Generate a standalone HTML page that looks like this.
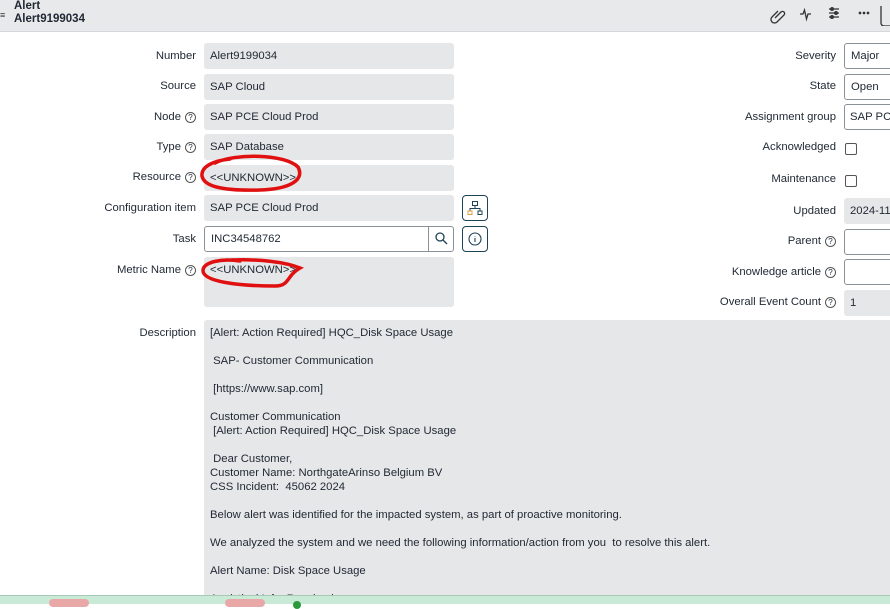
<!DOCTYPE html>
<html><head><style>
*{box-sizing:border-box;margin:0;padding:0}
body{width:890px;height:604px;overflow:hidden;background:#fff;font-family:"Liberation Sans",sans-serif;font-size:11.3px;color:#1f2733;position:relative}
.hdr{position:absolute;left:0;top:0;width:890px;height:32px;background:#e8e9eb;border-bottom:1px solid #d5d7da}
.hdr .t{position:absolute;left:14px;top:0;font-weight:bold;font-size:11.5px;line-height:13px}
.lbl{position:absolute;text-align:right;white-space:nowrap;line-height:14px}
.in{position:absolute;border-radius:3px;padding:0 6px;line-height:26px;white-space:nowrap;overflow:hidden}
.g{background:#e6e7e9}
.w{background:#fff;border:1px solid #8b9199}
.q{display:inline-block;width:11px;height:11px;border:1px solid #555;border-radius:50%;font-size:8px;line-height:9px;text-align:center;vertical-align:0px;margin-left:4px}
.cb{position:absolute;width:12px;height:12px;border:1px solid #555;border-radius:2px;background:#fff}
.btn{position:absolute;width:26px;height:26px;border:1px solid #1d4354;border-radius:4px;background:#fff}
.desc{position:absolute;left:204px;top:320px;width:700px;height:280px;background:#e6e7e9;border-radius:3px;padding:6px 6px;line-height:14px}
.desc p{margin-bottom:14px}
</style></head><body>
<div class="hdr"><div style="position:absolute;left:0;top:10px;font-size:9px;color:#333">≡</div><div class="t">Alert<br>Alert9199034</div>
<svg style="position:absolute;left:770px;top:6px" width="120" height="20" fill="none" stroke="#333" stroke-width="1.3">
<path d="M5 12 l6-6 a2 2 0 0 1 3 3 l-7 7 a3.5 3.5 0 0 1-5-5 l6-6"/>
<path d="M30 8 h3 l1.5-4 l2 9 l1.5-5 h3"/>
<path d="M59 3h10M59 7h10M59 11h10"/><circle cx="62" cy="3" r="1.3"/><circle cx="66" cy="7" r="1.3"/><circle cx="62" cy="11" r="1.3"/>
<circle cx="90" cy="7" r=".7" fill="#333"/><circle cx="94" cy="7" r=".7" fill="#333"/><circle cx="98" cy="7" r=".7" fill="#333"/>
<rect x="111" y="-2" width="14" height="22" rx="3"/>
</svg></div>

<div class="lbl" style="right:694px;top:49px">Number</div><div class="in g" style="left:204px;top:43px;width:250px">Alert9199034</div>
<div class="lbl" style="right:694px;top:79px">Source</div><div class="in g" style="left:204px;top:74px;width:250px">SAP Cloud</div>
<div class="lbl" style="right:694px;top:110px">Node<span class="q">?</span></div><div class="in g" style="left:204px;top:104px;width:250px">SAP PCE Cloud Prod</div>
<div class="lbl" style="right:694px;top:140px">Type<span class="q">?</span></div><div class="in g" style="left:204px;top:134px;width:250px">SAP Database</div>
<div class="lbl" style="right:694px;top:170px">Resource<span class="q">?</span></div><div class="in g" style="left:204px;top:165px;width:250px">&lt;&lt;UNKNOWN&gt;&gt;</div>
<div class="lbl" style="right:694px;top:201px">Configuration item</div><div class="in g" style="left:204px;top:195px;width:250px">SAP PCE Cloud Prod</div>
<div class="btn" style="left:462px;top:195px"><svg width="24" height="24" fill="none" stroke="#1d4354" stroke-width="1"><rect x="9.5" y="5.5" width="5" height="4"/><path d="M12 9.5v3M7 15v-2.5h10V15"/><rect x="5" y="15" width="4" height="3.5" stroke="#e0a040"/><rect x="15" y="15" width="4" height="3.5"/></svg></div>
<div class="lbl" style="right:694px;top:232px">Task</div><div class="in w" style="left:204px;top:226px;width:250px;line-height:24px">INC34548762<div style="position:absolute;right:0;top:0;width:25px;height:24px;border-left:1px solid #8b9199"><svg width="24" height="24" fill="none" stroke="#1d4354" stroke-width="1.3"><circle cx="11" cy="10" r="4"/><path d="M14 13l4 4"/></svg></div></div>
<div class="btn" style="left:462px;top:226px"><svg width="24" height="24" fill="none" stroke="#1d4354" stroke-width="1.1"><circle cx="12" cy="12" r="6"/><path d="M12 11v4M12 9v.5"/></svg></div>
<div class="lbl" style="right:694px;top:263px">Metric Name<span class="q">?</span></div><div class="in g" style="left:204px;top:257px;width:250px;height:50px;line-height:26px">&lt;&lt;UNKNOWN&gt;&gt;</div>

<div class="lbl" style="right:694px;top:326px">Description</div>
<div class="desc">
<p>[Alert: Action Required] HQC_Disk Space Usage</p>
<p>&nbsp;SAP- Customer Communication</p>
<p>&nbsp;[https://www.sap.com]</p>
<p>Customer Communication<br>&nbsp;[Alert: Action Required] HQC_Disk Space Usage</p>
<p>&nbsp;Dear Customer,<br>Customer Name: NorthgateArinso Belgium BV<br>CSS Incident:&nbsp; 45062 2024</p>
<p>Below alert was identified for the impacted system, as part of proactive monitoring.</p>
<p>We analyzed the system and we need the following information/action from you&nbsp; to resolve this alert.</p>
<p>Alert Name: Disk Space Usage</p>
<p>Analytical Info: Resolved</p>
</div>

<div class="lbl" style="right:54px;top:49px">Severity</div><div class="in w" style="left:844px;top:43px;width:60px;line-height:24px">Major</div>
<div class="lbl" style="right:54px;top:79px">State</div><div class="in w" style="left:844px;top:74px;width:60px;line-height:24px">Open</div>
<div class="lbl" style="right:54px;top:110px">Assignment group</div><div class="in w" style="left:844px;top:104px;width:60px;line-height:24px;padding-left:5px">SAP PCE</div>
<div class="lbl" style="right:54px;top:140px">Acknowledged</div><div class="cb" style="left:845px;top:143px"></div>
<div class="lbl" style="right:54px;top:172px">Maintenance</div><div class="cb" style="left:845px;top:175px"></div>
<div class="lbl" style="right:54px;top:204px">Updated</div><div class="in g" style="left:844px;top:198px;width:60px">2024-11</div>
<div class="lbl" style="right:54px;top:234px">Parent<span class="q">?</span></div><div class="in w" style="left:844px;top:229px;width:60px;height:26px"></div>
<div class="lbl" style="right:54px;top:265px">Knowledge article<span class="q">?</span></div><div class="in w" style="left:844px;top:259px;width:60px;height:26px"></div>
<div class="lbl" style="right:54px;top:295px">Overall Event Count<span class="q">?</span></div><div class="in g" style="left:844px;top:290px;width:60px">1</div>

<div style="position:absolute;left:0;top:595px;width:890px;height:9px;background:#c8ead6;border-top:1px solid #a9c9b8">
<div style="position:absolute;left:49px;top:3px;width:40px;height:8px;background:#e8a8a8;border-radius:4px"></div>
<div style="position:absolute;left:225px;top:3px;width:40px;height:8px;background:#e8a8a8;border-radius:4px"></div>
<div style="position:absolute;left:293px;top:5px;width:8px;height:8px;background:#2a9a3a;border-radius:4px"></div>
</div>

<svg style="position:absolute;left:0;top:0" width="890" height="604" fill="none" stroke="#e01010" stroke-width="3.5" stroke-linecap="round">
<path d="M215 163 C235 153 285 154 298 167 C305 180 290 189 260 190 C225 191 204 187 202 176 C201 167 212 161 230 159"/>
<path d="M240 261 C222 258 204 262 203 270 C202 282 240 286 275 286 C290 286 286 276 300 268 C285 262 260 259 232 260"/>
</svg>
</body></html>
